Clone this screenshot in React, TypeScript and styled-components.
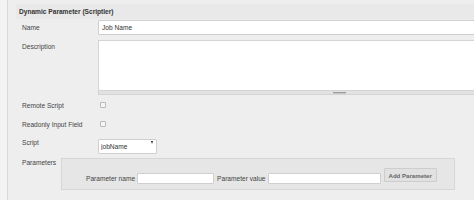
import React from 'react'
import styled, { createGlobalStyle } from 'styled-components'

const GlobalStyle = createGlobalStyle`
  html, body {
    margin: 0;
    padding: 0;
    background: #f3f3f3;
    overflow: hidden;
  }

  body {
    font-family: "Liberation Sans", Arial, sans-serif;
    color: #3a3a3a;
  }
`

const Page = styled.div`
  height: 200px;
  padding-left: 7px;
  overflow: hidden;
`

const Panel = styled.section`
  height: 100%;
  box-sizing: border-box;
  padding-top: 4px;
  background: #eeeeee;
  border-left: 1px solid #d9d9d9;
  overflow: hidden;
`

const Header = styled.div`
  margin-left: 8px;
  height: 15px;
  padding-left: 3px;
  display: flex;
  align-items: center;
  background: #e9e9e9;
  font-size: 6.6px;
  font-weight: bold;
  color: #333;
`

const Row = styled.div<{ $top: number; $height: number; $align?: 'center' | 'flex-start' }>`
  display: flex;
  align-items: ${({ $align }) => $align ?? 'center'};
  margin-top: ${({ $top }) => $top}px;
  height: ${({ $height }) => $height}px;
`

const Label = styled.div<{ $width?: number; $pt?: number }>`
  flex: none;
  box-sizing: border-box;
  width: ${({ $width }) => $width ?? 90}px;
  padding-left: 14px;
  padding-top: ${({ $pt }) => $pt ?? 0}px;
  font-size: 6.6px;
  color: #444;
  white-space: nowrap;
`

const TextInput = styled.input<{ $width: number; $height: number }>`
  flex: none;
  box-sizing: border-box;
  width: ${({ $width }) => $width}px;
  height: ${({ $height }) => $height}px;
  margin: 0;
  padding: 0 3px;
  background: #fff;
  border: 1px solid #cfcfcf;
  border-radius: 1px;
  font-family: inherit;
  font-size: 6.6px;
  color: #333;
  outline: none;
`

const AreaWrap = styled.div`
  flex: none;
  display: flex;
  flex-direction: column;
  width: 482px;
`

const TextArea = styled.textarea`
  box-sizing: border-box;
  width: 100%;
  height: 50px;
  margin: 0;
  padding: 3px;
  background: #fff;
  border: 1px solid #d4d4d4;
  border-bottom: none;
  resize: none;
  outline: none;
  display: block;
`

const Grip = styled.div`
  box-sizing: border-box;
  height: 5px;
  display: flex;
  align-items: center;
  justify-content: center;
  background: #e2e2e2;
  border: 1px solid #d4d4d4;
`

const GripHandle = styled.span`
  width: 13px;
  height: 1px;
  background: #9c9c9c;
  box-shadow: 0 1px 0 #c8c8c8;
`

const Check = styled.input.attrs({ type: 'checkbox' })`
  appearance: none;
  box-sizing: border-box;
  width: 6px;
  height: 6px;
  margin: 0 0 0 2px;
  background: #f6f6f6;
  border: 1px solid #b9b9b9;
  border-radius: 1px;
`

const SelectWrap = styled.div`
  position: relative;
  width: 59px;
  height: 15px;
`

const Select = styled.select`
  appearance: none;
  box-sizing: border-box;
  width: 100%;
  height: 100%;
  margin: 0;
  padding: 0 2px;
  background: #fff;
  border: 1px solid #cfcfcf;
  border-radius: 1px;
  font-family: inherit;
  font-size: 6.6px;
  color: #333;
  outline: none;
`

const Arrow = styled.span`
  position: absolute;
  right: 4px;
  top: 6px;
  width: 0;
  height: 0;
  border-left: 1.5px solid transparent;
  border-right: 1.5px solid transparent;
  border-top: 3px solid #222;
  pointer-events: none;
`

const ParamBox = styled.div`
  box-sizing: border-box;
  width: 394px;
  height: 32px;
  display: flex;
  align-items: flex-end;
  padding: 0 0 5px 24px;
  background: #e6e6e6;
  border: 1px solid #d6d6d6;
`

const ParamText = styled.span<{ $before?: number }>`
  font-size: 6.6px;
  line-height: 11px;
  color: #444;
  margin: 0 2px 0 ${({ $before }) => $before ?? 0}px;
  white-space: nowrap;
`

const Button = styled.button`
  box-sizing: border-box;
  height: 14px;
  margin: 0 0 2px 3px;
  padding: 0 4px;
  background: #e1e1e1;
  border: 1px solid #cdcdcd;
  border-radius: 1px;
  font-family: inherit;
  font-size: 6.1px;
  font-weight: bold;
  color: #666;
`

export default function App() {
  return (
    <>
      <GlobalStyle />
      <Page>
        <Panel>
          <Header>Dynamic Parameter (Scriptler)</Header>
          <Row $top={1} $height={15}>
            <Label>Name</Label>
            <TextInput $width={482} $height={15} defaultValue="Job Name" />
          </Row>
          <Row $top={5} $height={55} $align="flex-start">
            <Label $pt={3}>Description</Label>
            <AreaWrap>
              <TextArea />
              <Grip>
                <GripHandle />
              </Grip>
            </AreaWrap>
          </Row>
          <Row $top={3} $height={14}>
            <Label>Remote Script</Label>
            <Check />
          </Row>
          <Row $top={5} $height={14}>
            <Label>Readonly Input Field</Label>
            <Check />
          </Row>
          <Row $top={4} $height={15}>
            <Label>Script</Label>
            <SelectWrap>
              <Select defaultValue="jobName">
                <option value="jobName">jobName</option>
              </Select>
              <Arrow />
            </SelectWrap>
          </Row>
          <Row $top={8} $height={32} $align="flex-start">
            <Label $width={53} $pt={1}>Parameters</Label>
            <ParamBox>
              <ParamText>Parameter name</ParamText>
              <TextInput $width={77} $height={11} />
              <ParamText $before={3}>Parameter value</ParamText>
              <TextInput $width={113} $height={11} />
              <Button>Add Parameter</Button>
            </ParamBox>
          </Row>
        </Panel>
      </Page>
    </>
  )
}
